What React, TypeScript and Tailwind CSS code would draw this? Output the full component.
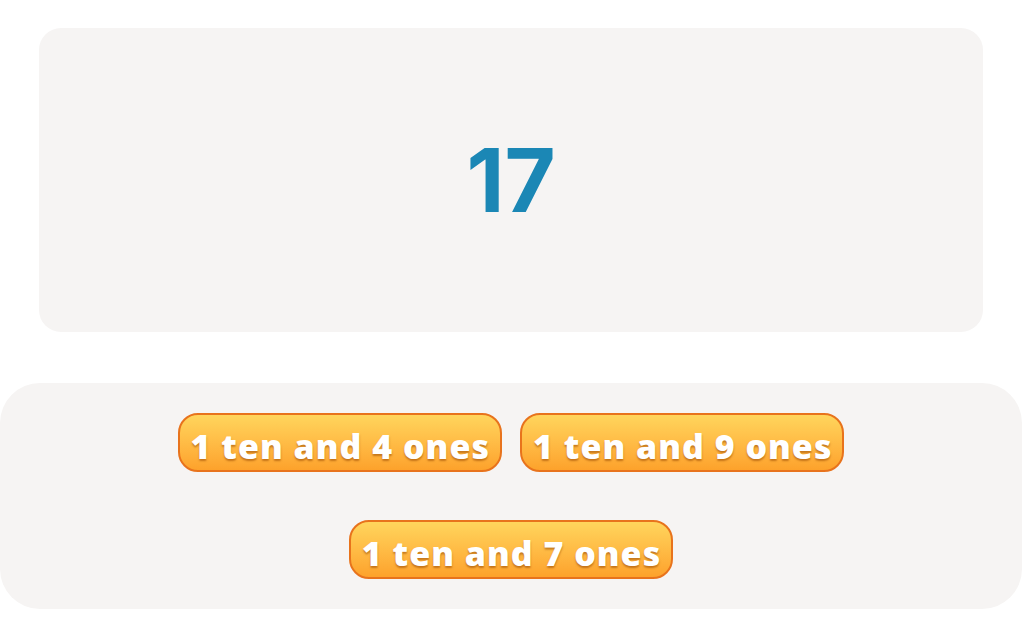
const OPTIONS = ['1 ten and 4 ones', '1 ten and 9 ones', '1 ten and 7 ones'];

function Choice({ label }: { label: string }) {
  return (
    <button className="h-[59px] pl-[11px] pr-[10px] pt-[6px] rounded-[20px] border-2 border-[#e8731c] bg-gradient-to-b from-[#ffd55c] to-[#fda22b] text-white text-[34px] font-extrabold tracking-[1px] [text-shadow:0_2px_2px_rgba(150,70,0,0.55)] leading-none" style={{ fontFamily: '"Open Sans", "Liberation Sans", sans-serif' }}>
      {label}
    </button>
  );
}

export default function App() {
  return (
    <div className="w-[1022px] h-[640px] bg-white flex flex-col" style={{ fontFamily: 'Inter, "Liberation Sans", sans-serif' }}>
      <div className="mx-[39px] mt-[28px] h-[304px] rounded-[22px] bg-[#f6f4f3] flex items-center justify-center">
        <span className="text-[#1b87b5] text-[88px] font-bold leading-none">17</span>
      </div>
      <div className="mt-[51px] h-[226px] rounded-[40px] bg-[#f6f4f3] flex flex-col items-center pt-[30px] gap-[48px]">
        <div className="flex gap-[18px]">
          <Choice label={OPTIONS[0]} />
          <Choice label={OPTIONS[1]} />
        </div>
        <Choice label={OPTIONS[2]} />
      </div>
    </div>
  );
}
